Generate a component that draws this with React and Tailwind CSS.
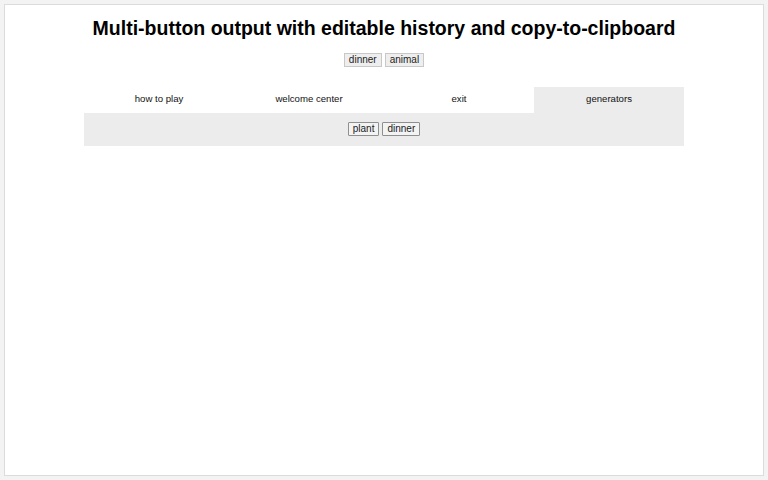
import { useState } from 'react'

const tabs = ['how to play', 'welcome center', 'exit', 'generators']

export default function App() {
  const [active, setActive] = useState('generators')

  return (
    <div className="h-[480px] w-[768px] bg-[#f3f3f3] p-[4px]" style={{ fontFamily: '"Liberation Sans", Arial, sans-serif' }}>
      <div className="h-[472px] w-[760px] bg-white border border-[#dcdcdc] flex flex-col items-center">
        {/* Title */}
        <h1 className="mt-[12px] text-[19.5px] leading-[22px] font-bold text-black">
          Multi-button output with editable history and copy-to-clipboard
        </h1>

        {/* Output buttons */}
        <div className="mt-[14px] flex gap-[3px]">
          {['dinner', 'animal'].map(b => (
            <button key={b} className="h-[14px] px-[4px] text-[10px] leading-[12px] text-[#222] bg-[#eeeeee] border border-[#c8c8c8]">
              {b}
            </button>
          ))}
        </div>

        {/* Tabs */}
        <div className="mt-[20px] w-[600px]">
          <div className="flex">
            {tabs.map(t => (
              <div
                key={t}
                onClick={() => setActive(t)}
                className={`w-[150px] h-[26px] flex items-center justify-center pb-[2px] text-[9.6px] text-[#111] ${active === t ? 'bg-[#ececec]' : 'bg-white'}`}
              >
                {t}
              </div>
            ))}
          </div>
          <div className="h-[33px] bg-[#ececec] flex justify-center items-center gap-[3px] pb-[1px]">
            {['plant', 'dinner'].map(b => (
              <button key={b} className="h-[14px] px-[4px] text-[10px] leading-[12px] text-[#222] bg-[#f3f3f3] border border-[#8f8f8f] rounded-[1px]">
                {b}
              </button>
            ))}
          </div>
        </div>
      </div>
    </div>
  )
}
